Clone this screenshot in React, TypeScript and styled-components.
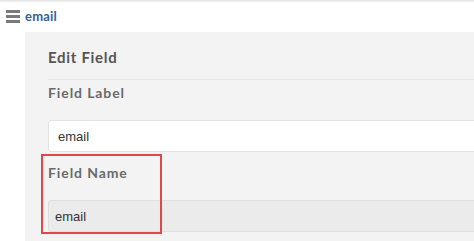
import React from "react";
import styled, { createGlobalStyle } from "styled-components";

const GlobalStyle = createGlobalStyle`
  html, body {
    margin: 0;
    padding: 0;
    background: #ffffff;
    overflow: hidden;
  }
  body {
    font-family: "Lato", "Open Sans", sans-serif;
  }
`;

const App: React.FC = () => {
  return (
    <Page>
      <GlobalStyle />
      <Header>
        <MenuIcon>
          <span />
          <span />
          <span />
        </MenuIcon>
        <HeaderTitle>email</HeaderTitle>
      </Header>
      <Panel>
        <Title>Edit Field</Title>
        <Group>
          <Label>Field Label</Label>
          <Input type="text" defaultValue="email" />
        </Group>
        <Group $highlighted>
          <Highlight />
          <Label>Field Name</Label>
          <Input type="text" defaultValue="email" disabled />
        </Group>
      </Panel>
    </Page>
  );
};

export default App;

const Page = styled.div`
  width: 474px;
  height: 241px;
  display: flex;
  flex-direction: column;
  overflow: hidden;
`;

const Header = styled.div`
  height: 32px;
  display: flex;
  align-items: center;
  gap: 5px;
  padding-left: 6px;
  background: linear-gradient(#e1e1e1, #ffffff 3px);
`;

const MenuIcon = styled.div`
  width: 14px;
  display: flex;
  flex-direction: column;
  gap: 2px;
  margin-top: 1px;

  span {
    display: block;
    height: 3px;
    background: #7a7a7a;
  }
`;

const HeaderTitle = styled.span`
  font-family: "Lato", sans-serif;
  font-weight: 700;
  font-size: 13px;
  color: #2f6496;
  letter-spacing: 0.2px;
`;

const Panel = styled.div`
  flex: 1;
  margin-left: 25px;
  background: #f3f3f3;
  padding-left: 23px;
  overflow: hidden;
`;

const Title = styled.div`
  margin-top: 15px;
  padding-bottom: 12px;
  border-bottom: 1px solid #e6e6e6;
  font-weight: 700;
  font-size: 15px;
  line-height: 20px;
  letter-spacing: 0.7px;
  color: #555555;
`;

const Group = styled.div<{ $highlighted?: boolean }>`
  position: relative;
  display: flex;
  flex-direction: column;
  gap: 17px;
  margin-top: ${(p) => (p.$highlighted ? "2px" : "3px")};
  padding-top: ${(p) => (p.$highlighted ? "9px" : "0")};
`;

const Label = styled.div`
  font-weight: 700;
  font-size: 14px;
  line-height: 20px;
  letter-spacing: 0.9px;
  color: #6a6a6a;
`;

const Input = styled.input`
  box-sizing: border-box;
  width: calc(100% + 10px);
  height: 32px;
  padding: 0 9px;
  border: 1px solid #e2e2e2;
  border-radius: 3px;
  background: #ffffff;
  font-family: "Liberation Sans", Arial, sans-serif;
  font-size: 13px;
  color: #333333;
  outline: none;

  &:disabled {
    background: #ebebeb;
    border-color: #dedede;
    color: #333333;
    padding-left: 6px;
  }
`;

const Highlight = styled.div`
  position: absolute;
  top: 0;
  left: -7px;
  width: 121px;
  height: 80px;
  box-sizing: border-box;
  border: 2px solid #e0474c;
  pointer-events: none;
  z-index: 1;
`;
